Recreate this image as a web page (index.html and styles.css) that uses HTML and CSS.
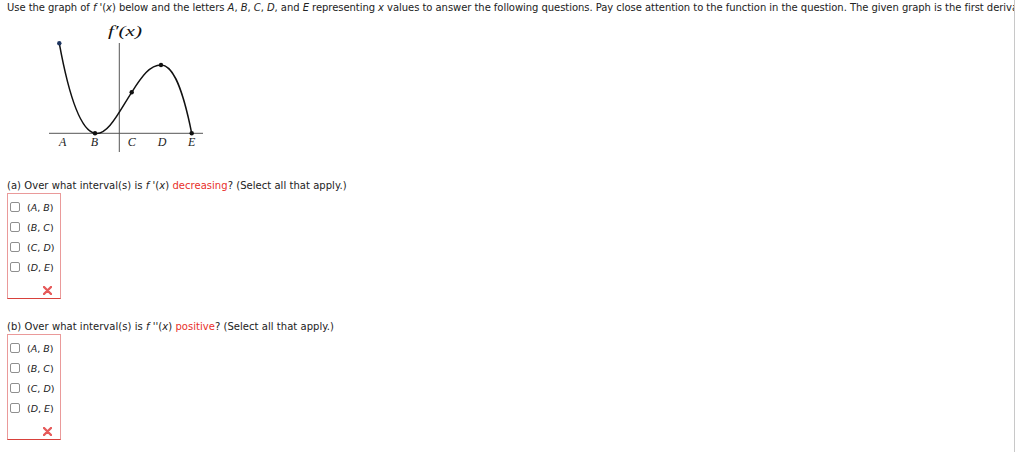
FILE: index.html
```html
<!DOCTYPE html>
<html>
<head>
<meta charset="utf-8">
<link rel="stylesheet" href="styles.css">
</head>
<body>
<div class="page">
  <p class="intro">Use the graph of <i>f</i> '(<i>x</i>) below and the letters <i>A</i>, <i>B</i>, <i>C</i>, <i>D</i>, and <i>E</i> representing <i>x</i> values to answer the following questions. Pay close attention to the function in the question. The given graph is the first derivative of a function.</p>

  <svg class="graph" width="220" height="140" viewBox="0 16 220 140" xmlns="http://www.w3.org/2000/svg">
    <line x1="49" y1="133.3" x2="203" y2="133.3" stroke="#555" stroke-width="1"/>
    <line x1="119.3" y1="43" x2="119.3" y2="152" stroke="#555" stroke-width="1"/>
    <text x="108" y="35.5" class="flabel" textLength="34" lengthAdjust="spacingAndGlyphs">f′(x)</text>
    <path d="M59.3,43.3 C66,80 78,130 95,133.3 C108,136 120,110 131.7,92.3 C142,76 150,65 161,65 C171,65 181,80 191.7,133.3" fill="none" stroke="#111" stroke-width="1.5"/>
    <circle cx="59.3" cy="43.3" r="2.2" fill="#1d3560"/>
    <circle cx="95" cy="133.3" r="2.2" fill="#111"/>
    <circle cx="131.7" cy="92.3" r="2.2" fill="#111"/>
    <circle cx="161" cy="65" r="2.2" fill="#111"/>
    <circle cx="191.7" cy="133.3" r="2.2" fill="#111"/>
    <text x="62.7" y="146" class="pt">A</text>
    <text x="94.5" y="146" class="pt">B</text>
    <text x="131.7" y="146" class="pt">C</text>
    <text x="162" y="146" class="pt">D</text>
    <text x="191.7" y="146" class="pt">E</text>
  </svg>

  <p class="question q-a">(a) Over what interval(s) is <i>f</i> '(<i>x</i>) <span class="hl">decreasing</span>? (Select all that apply.)</p>
  <div class="answers">
    <div class="row"><span class="cb"></span><span class="lbl">(<i>A</i>, <i>B</i>)</span></div>
    <div class="row"><span class="cb"></span><span class="lbl">(<i>B</i>, <i>C</i>)</span></div>
    <div class="row"><span class="cb"></span><span class="lbl">(<i>C</i>, <i>D</i>)</span></div>
    <div class="row"><span class="cb"></span><span class="lbl">(<i>D</i>, <i>E</i>)</span></div>
    <div class="mark"><svg width="9" height="9" viewBox="0 0 9 9"><path d="M1,1 L8,8 M8,1 L1,8" stroke="#e65a5a" stroke-width="2.4" stroke-linecap="round"/></svg></div>
  </div>

  <p class="question q-b">(b) Over what interval(s) is <i>f</i> ''(<i>x</i>) <span class="hl">positive</span>? (Select all that apply.)</p>
  <div class="answers">
    <div class="row"><span class="cb"></span><span class="lbl">(<i>A</i>, <i>B</i>)</span></div>
    <div class="row"><span class="cb"></span><span class="lbl">(<i>B</i>, <i>C</i>)</span></div>
    <div class="row"><span class="cb"></span><span class="lbl">(<i>C</i>, <i>D</i>)</span></div>
    <div class="row"><span class="cb"></span><span class="lbl">(<i>D</i>, <i>E</i>)</span></div>
    <div class="mark"><svg width="9" height="9" viewBox="0 0 9 9"><path d="M1,1 L8,8 M8,1 L1,8" stroke="#e65a5a" stroke-width="2.4" stroke-linecap="round"/></svg></div>
  </div>
</div>
</body>
</html>
```

FILE: styles.css
```css
html, body {
  margin: 0;
  padding: 0;
  background: #fff;
}

.page {
  width: 1014px;
  height: 452px;
  overflow: hidden;
  border-right: 1px solid #c8c8c8;
  font-family: "DejaVu Sans", Verdana, sans-serif;
  font-size: 10px;
  color: #222;
}

.intro {
  margin: 0;
  padding-left: 7px;
  line-height: 16px;
  white-space: nowrap;
  letter-spacing: -0.05px;
}

.graph {
  display: block;
}

.flabel {
  font-family: "Liberation Serif", serif;
  font-style: italic;
  font-size: 15px;
  fill: #111;
}

.pt {
  font-family: "Liberation Serif", serif;
  font-style: italic;
  font-size: 12px;
  fill: #222;
  text-anchor: middle;
}

.question {
  margin: 0;
  padding-left: 7px;
  line-height: 14px;
  white-space: nowrap;
  letter-spacing: 0.04px;
}

.q-a {
  margin-top: 23px;
}

.q-b {
  margin-top: 21px;
}

.hl {
  color: #e8302a;
}

.answers {
  margin-left: 7px;
  width: 52px;
  border: 1px solid #ea9a9a;
  border-bottom-color: #d8413b;
  padding: 3px 0 1px 0;
}

.row {
  height: 20px;
  display: flex;
  align-items: center;
}

.cb {
  width: 8px;
  height: 8px;
  margin-left: 2px;
  border: 1px solid #8f8f8f;
  border-radius: 2px;
  background: #fff;
  flex: none;
}

.lbl {
  margin-left: 7px;
  white-space: nowrap;
  font-size: 9.5px;
}

.mark {
  margin-top: 6px;
  height: 14px;
  display: flex;
  align-items: center;
  justify-content: flex-end;
  padding-right: 8px;
}

.mark svg {
  display: block;
}
```
